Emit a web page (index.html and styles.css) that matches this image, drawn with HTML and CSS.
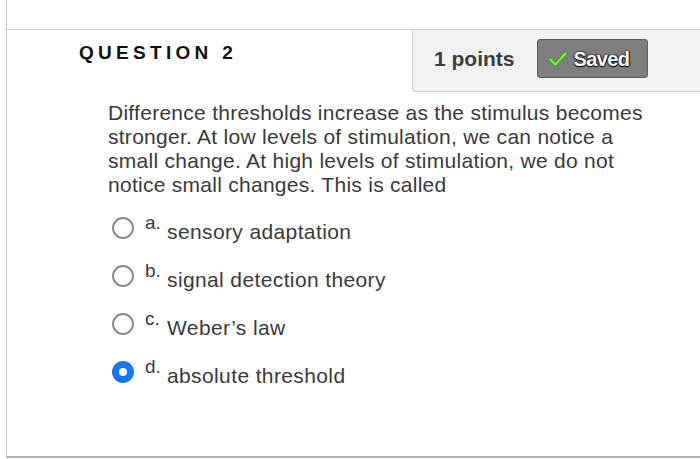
FILE: index.html
```html
<!DOCTYPE html>
<html>
<head>
<meta charset="utf-8">
<link rel="stylesheet" href="styles.css">
</head>
<body>
<div class="frame">
  <div class="header">
    <h2 class="title">QUESTION 2</h2>
    <div class="points-box">
      <span class="points">1 points</span>
      <span class="saved">
        <svg class="check" width="20" height="18" viewBox="0 0 20 18"><path d="M2.5 9.5 L7.5 14.5 L17.5 3.5" fill="none" stroke="#3f9a1c" stroke-width="4.5" stroke-linecap="round" stroke-linejoin="round"/><path d="M2.5 9.5 L7.5 14.5 L17.5 3.5" fill="none" stroke="#7ee052" stroke-width="2.5" stroke-linecap="round" stroke-linejoin="round"/></svg>
        <span class="saved-text">Saved</span>
      </span>
    </div>
  </div>
  <p class="question">Difference thresholds increase as the stimulus becomes stronger. At low levels of stimulation, we can notice a small change. At high levels of stimulation, we do not notice small changes. This is called</p>
  <ul class="options">
    <li class="option"><span class="radio"></span><span class="letter">a.</span><span class="answer">sensory adaptation</span></li>
    <li class="option"><span class="radio"></span><span class="letter">b.</span><span class="answer">signal detection theory</span></li>
    <li class="option"><span class="radio"></span><span class="letter">c.</span><span class="answer">Weber’s law</span></li>
    <li class="option"><span class="radio checked"></span><span class="letter">d.</span><span class="answer">absolute threshold</span></li>
  </ul>
</div>
</body>
</html>
```
FILE: styles.css
```css
html, body {
  margin: 0;
  padding: 0;
  background: #ffffff;
}
body {
  font-family: "Liberation Sans", Arial, Helvetica, sans-serif;
  color: #3a3a3a;
}
.frame {
  margin-left: 6px;
  border-left: 1px solid #c4c4c4;
  border-bottom: 2px solid #b4b4b4;
  padding-top: 29px;
  box-sizing: border-box;
  height: 458px;
}
.header {
  border-top: 1px solid #cfcfcf;
  display: flex;
  justify-content: space-between;
  height: 62px;
}
.title {
  margin: 13px 0 0 72px;
  font-size: 19px;
  line-height: 20px;
  font-weight: bold;
  letter-spacing: 4.3px;
  color: #111;
}
.points-box {
  width: 288px;
  box-sizing: border-box;
  background: #f2f2f2;
  border-left: 1px solid #d3d3d3;
  border-bottom: 1px solid #d3d3d3;
  border-bottom-left-radius: 4px;
  display: flex;
  align-items: flex-start;
  padding: 9px 0 0 21px;
}
.points {
  font-size: 21px;
  font-weight: bold;
  line-height: 39px;
  color: #3d3d3d;
  margin-right: 22px;
}
.saved {
  width: 111px;
  height: 39px;
  box-sizing: border-box;
  background: #7e7e7e;
  border: 1px solid #5c5c5c;
  border-radius: 3px;
  display: flex;
  align-items: center;
  padding-left: 10px;
  gap: 6px;
}
.check {
  display: block;
}
.saved-text {
  color: #ffffff;
  font-size: 20px;
  line-height: 24px;
  font-weight: bold;
  letter-spacing: -0.6px;
  text-shadow: 0 0 1px #000, 0 1px 1px #000, 0 0 2px #222, 1px 0 1px #111;
}
.question {
  margin: 9px 40px 0 101px;
  font-size: 21px;
  line-height: 24px;
  letter-spacing: 0.27px;
  color: #3a3a3a;
}
.options {
  list-style: none;
  margin: 15px 0 0 105px;
  padding: 0;
}
.option {
  display: flex;
  align-items: flex-start;
  height: 48px;
}
.radio {
  width: 22px;
  height: 22px;
  box-sizing: border-box;
  border: 2px solid #8c8c8c;
  border-radius: 50%;
  margin-top: 5px;
  flex: none;
}
.radio.checked {
  border: 7px solid #1877f2;
}
.letter {
  font-size: 19px;
  line-height: 19px;
  margin: 1px 0 0 11px;
  width: 22px;
  color: #3a3a3a;
}
.answer {
  font-size: 21px;
  line-height: 24px;
  letter-spacing: 0.38px;
  margin-top: 8px;
  color: #3a3a3a;
}
```
